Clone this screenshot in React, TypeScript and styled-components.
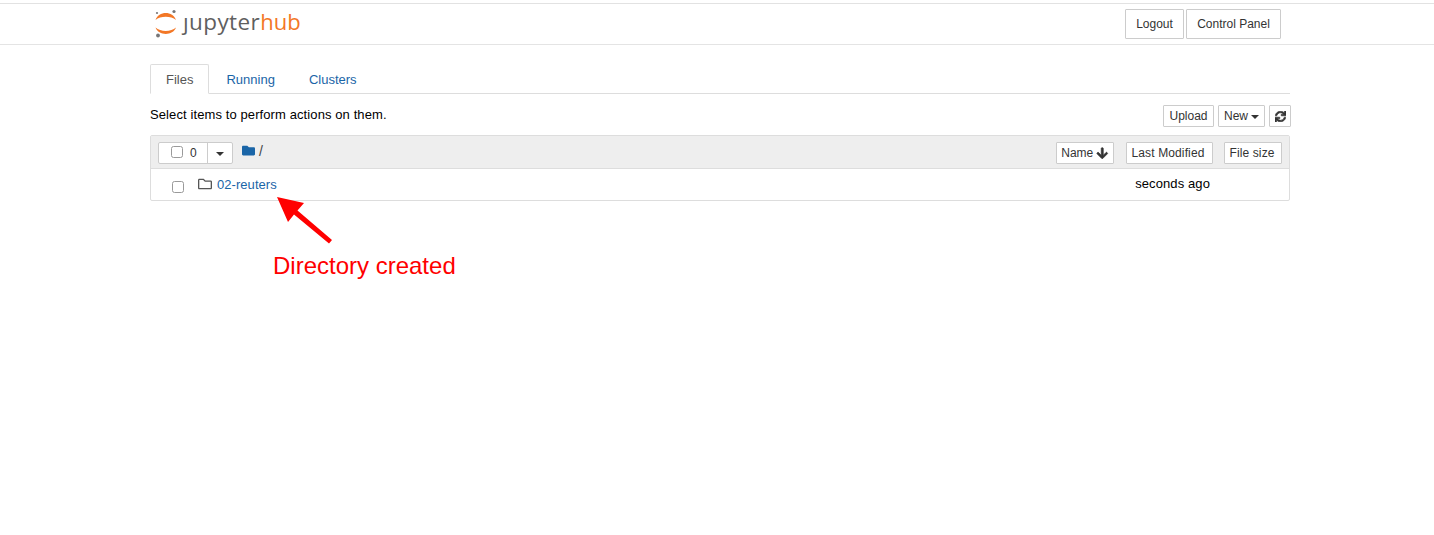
import React from "react";
import styled, { createGlobalStyle } from "styled-components";
import { FaFolder, FaRegFolder, FaArrowDown, FaSync } from "react-icons/fa";

const Global = createGlobalStyle`
  html, body { margin: 0; padding: 0; background: #fff; }
  body { font-family: "Liberation Sans", Arial, sans-serif; font-size: 13px; color: #000; }
`;

const Page = styled.div`
  position: relative;
  min-height: 535px;
  padding-top: 3px;
  box-sizing: border-box;
  overflow: hidden;
`;

const Header = styled.header`
  height: 40px;
  border-top: 1px solid #e2e2e2;
  border-bottom: 1px solid #e4e4e4;
`;

const HeaderInner = styled.div`
  width: 1140px;
  height: 100%;
  margin-left: 150px;
  display: flex;
  align-items: center;
  justify-content: space-between;
  padding: 0 9px 0 5px;
  box-sizing: border-box;
`;

const Logo = styled.div`
  display: flex;
  align-items: center;
  gap: 6px;
  height: 40px;
`;

const LogoText = styled.span`
  font-family: "Open Sans", sans-serif;
  font-size: 22.5px;
  line-height: 36px;
  letter-spacing: 0.4px;
  color: #5f5f5f;
  margin-top: -5px;
`;

const LogoAccent = styled.span`
  color: #f37726;
  font-size: 22px;
  letter-spacing: 0;
`;

const HeaderActions = styled.div`
  display: flex;
  gap: 2px;
  margin-top: -1px;
`;

const HeaderButton = styled.button<{ $width: number }>`
  box-sizing: border-box;
  width: ${(p) => p.$width}px;
  height: 30px;
  padding: 0;
  border: 1px solid #ccc;
  background: #fff;
  color: #333;
  font: 12px "Liberation Sans", Arial, sans-serif;
  border-radius: 1px;
`;

const Container = styled.main`
  width: 1140px;
  margin: 19px 0 0 150px;
`;

const Tabs = styled.nav`
  display: flex;
  gap: 1px;
  height: 30px;
  border-bottom: 1px solid #ddd;
  box-sizing: border-box;
`;

const Tab = styled.a<{ $active?: boolean }>`
  box-sizing: border-box;
  height: 30px;
  padding: 1px 15px 0;
  display: flex;
  align-items: center;
  font-size: 13px;
  border-radius: 2px 2px 0 0;
  border: 1px solid ${(p) => (p.$active ? "#ddd" : "transparent")};
  border-bottom-color: ${(p) => (p.$active ? "#fff" : "transparent")};
  background: ${(p) => (p.$active ? "#fff" : "transparent")};
  color: ${(p) => (p.$active ? "#555" : "#1a65a7")};
  &:last-child { margin-left: 1px; }
`;

const Toolbar = styled.div`
  height: 41px;
  display: flex;
  align-items: flex-start;
  justify-content: space-between;
`;

const Hint = styled.span`
  line-height: 15px;
  margin-top: 13px;
  letter-spacing: 0.1px;
`;

const ToolbarActions = styled.div`
  display: flex;
  gap: 4px;
  margin: 11px -1px 0 0;
`;

const SmallButton = styled.button<{ $width: number }>`
  box-sizing: border-box;
  width: ${(p) => p.$width}px;
  height: 22px;
  padding: 0;
  display: inline-flex;
  align-items: center;
  justify-content: center;
  gap: 3px;
  border: 1px solid #ccc;
  border-radius: 1px;
  background: #fff;
  color: #333;
  font: 12px "Liberation Sans", Arial, sans-serif;
`;

const Caret = styled.i`
  display: inline-block;
  width: 0;
  height: 0;
  border-left: 4px solid transparent;
  border-right: 4px solid transparent;
  border-top: 4px solid #333;
  margin-top: 1px;
`;

const ListPanel = styled.section`
  box-sizing: border-box;
  height: 66px;
  border: 1px solid #ddd;
  border-radius: 2px;
`;

const ListHeader = styled.div`
  box-sizing: border-box;
  height: 33px;
  background: #eee;
  border-bottom: 1px solid #ddd;
  display: flex;
  align-items: center;
  padding: 2px 7px 0;
`;

const SelectGroup = styled.div`
  box-sizing: border-box;
  width: 75px;
  height: 22px;
  display: flex;
  background: #fff;
  border: 1px solid #ccc;
  border-radius: 2px;
`;

const SelectMain = styled.div`
  width: 49px;
  border-right: 1px solid #ccc;
  display: flex;
  align-items: center;
  padding-left: 12px;
  gap: 7px;
  box-sizing: border-box;
  color: #333;
  font-size: 12px;
`;

const SelectCaret = styled.div`
  flex: 1;
  display: flex;
  align-items: center;
  justify-content: center;
`;

const Box = styled.span`
  display: block;
  box-sizing: border-box;
  width: 12px;
  height: 12px;
  border: 1px solid #9a9a9a;
  border-radius: 2.5px;
  background: #fff;
`;

const HeaderBox = styled(Box)`
  margin-top: -3px;
`;

const Crumb = styled.div`
  display: flex;
  align-items: center;
  gap: 4px;
  margin: -5px 0 0 9px;
  color: #444;
  font-size: 14px;
  svg { color: #1a65a7; font-size: 13px; margin-top: -1px; }
`;

const SortButtons = styled.div`
  margin-left: auto;
  display: flex;
  gap: 11px;
`;

const NameButton = styled(SmallButton)`
  margin-right: 1px;
`;

const WideButton = styled(SmallButton)<{ $inset: number }>`
  letter-spacing: 0.12px;
  padding-right: ${(p) => p.$inset}px;
`;

const Row = styled.div`
  height: 31px;
  display: flex;
  align-items: center;
  padding-left: 21px;
`;

const RowBox = styled(Box)`
  margin-top: 5px;
`;

const RowFolder = styled(FaRegFolder)`
  font-size: 14px;
  color: #555;
  margin-left: 14px;
  margin-top: -2px;
`;

const RowLink = styled.a`
  color: #1a65a7;
  font-size: 13px;
  margin-left: 5px;
  letter-spacing: 0.05px;
`;

const RowTime = styled.span`
  margin-left: auto;
  margin-right: 79px;
  margin-top: -2px;
  font-size: 13px;
  letter-spacing: 0.1px;
`;

const Annotation = styled.div`
  position: absolute;
  left: 273px;
  top: 195px;
  pointer-events: none;
`;

const AnnotationArrow = styled.svg`
  display: block;
`;

const AnnotationText = styled.div`
  color: #ff0000;
  font-size: 24px;
  line-height: 28px;
  margin-top: 8px;
  white-space: nowrap;
`;

const HeavyArrow = styled(FaArrowDown)`
  font-size: 12.5px;
  stroke: currentColor;
  stroke-width: 30px;
`;

const HeavySync = styled(FaSync)`
  font-size: 11px;
  stroke: currentColor;
  stroke-width: 30px;
`;

export default function App() {
  return (
    <Page>
      <Global />
      <Header>
        <HeaderInner>
          <Logo>
            <svg width="22" height="30" viewBox="155 9 22 30" aria-hidden="true">
              <path d="M155.5 20 C158.5 10.5 173 10.5 176 20 C171 15.8 160.5 15.8 155.5 20Z" fill="#f37726" />
              <path d="M155.5 27.5 C160.5 32 171 32 176 27.5 C173 36 158.5 36 155.5 27.5Z" fill="#f37726" />
              <circle cx="174" cy="11.5" r="1.6" fill="#767677" />
              <circle cx="157" cy="13" r="1.1" fill="#767677" />
              <circle cx="158" cy="35.5" r="1.9" fill="#767677" />
            </svg>
            <LogoText>ȷupyter<LogoAccent>hub</LogoAccent></LogoText>
          </Logo>
          <HeaderActions>
            <HeaderButton $width={59}>Logout</HeaderButton>
            <HeaderButton $width={95}>Control Panel</HeaderButton>
          </HeaderActions>
        </HeaderInner>
      </Header>
      <Container>
        <Tabs>
          <Tab $active>Files</Tab>
          <Tab>Running</Tab>
          <Tab>Clusters</Tab>
        </Tabs>
        <Toolbar>
          <Hint>Select items to perform actions on them.</Hint>
          <ToolbarActions>
            <SmallButton $width={51}>Upload</SmallButton>
            <SmallButton $width={47}>New <Caret /></SmallButton>
            <SmallButton $width={22}><HeavySync /></SmallButton>
          </ToolbarActions>
        </Toolbar>
        <ListPanel>
          <ListHeader>
            <SelectGroup>
              <SelectMain><HeaderBox />0</SelectMain>
              <SelectCaret><Caret /></SelectCaret>
            </SelectGroup>
            <Crumb><FaFolder />/</Crumb>
            <SortButtons>
              <NameButton $width={58}>Name <HeavyArrow /></NameButton>
              <WideButton $width={87} $inset={3}>Last Modified</WideButton>
              <WideButton $width={58} $inset={2}>File size</WideButton>
            </SortButtons>
          </ListHeader>
          <Row>
            <RowBox />
            <RowFolder />
            <RowLink>02-reuters</RowLink>
            <RowTime>seconds ago</RowTime>
          </Row>
        </ListPanel>
      </Container>
      <Annotation>
        <AnnotationArrow width="60" height="49" viewBox="273 195 60 49" aria-hidden="true">
          <path d="M277 197 L304 203 L297.5 210.5 L332 240 L329 243.5 L294 214.5 L288 222 Z" fill="#ff0000" />
        </AnnotationArrow>
        <AnnotationText>Directory created</AnnotationText>
      </Annotation>
    </Page>
  );
}
